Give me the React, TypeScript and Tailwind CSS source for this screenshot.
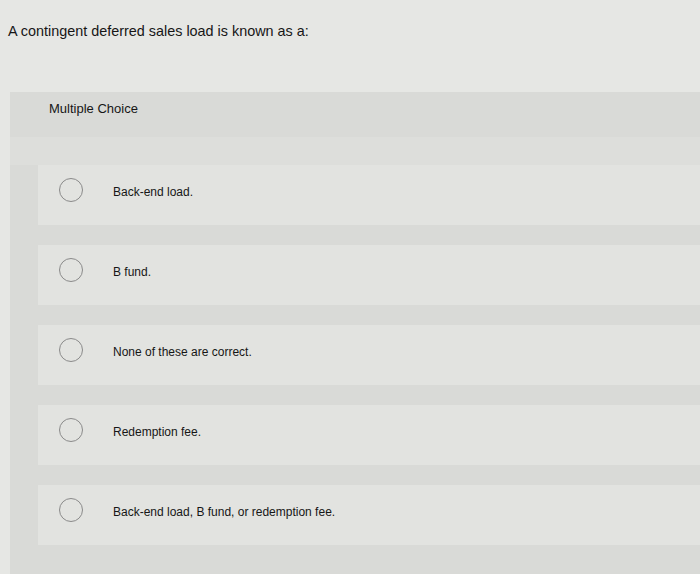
// Multiple choice question card
const options = [
  'Back-end load.',
  'B fund.',
  'None of these are correct.',
  'Redemption fee.',
  'Back-end load, B fund, or redemption fee.',
]

export default function App() {
  return (
    <div
      className="h-[574px] w-[700px] overflow-hidden bg-[#e6e7e4] text-[#161616]"
      style={{ fontFamily: '"Liberation Sans", Arial, sans-serif' }}
    >
      {/* Question */}
      <p className="px-2 pt-[21px] text-[14.4px] leading-5">
        A contingent deferred sales load is known as a:
      </p>

      {/* Answer panel */}
      <div className="ml-[10px] mt-[51px] h-[500px] bg-[#d9dad7]">
        <div className="h-[45px] pl-[39px] pt-[9px] text-[13px] leading-4">
          Multiple Choice
        </div>
        <div className="h-[28px] bg-[#dddedb]" />
        <div className="ml-[28px] flex flex-col gap-5">
          {options.map(opt => (
            <div key={opt} className="flex h-[60px] items-start bg-[#e2e3e0] pl-[21px] pt-[13px]">
              <span className="h-6 w-6 shrink-0 rounded-full border-[1.5px] border-[#8a8a8a]" />
              <span className="ml-[30px] mt-[6px] text-[12px] leading-4">{opt}</span>
            </div>
          ))}
        </div>
      </div>
    </div>
  )
}
